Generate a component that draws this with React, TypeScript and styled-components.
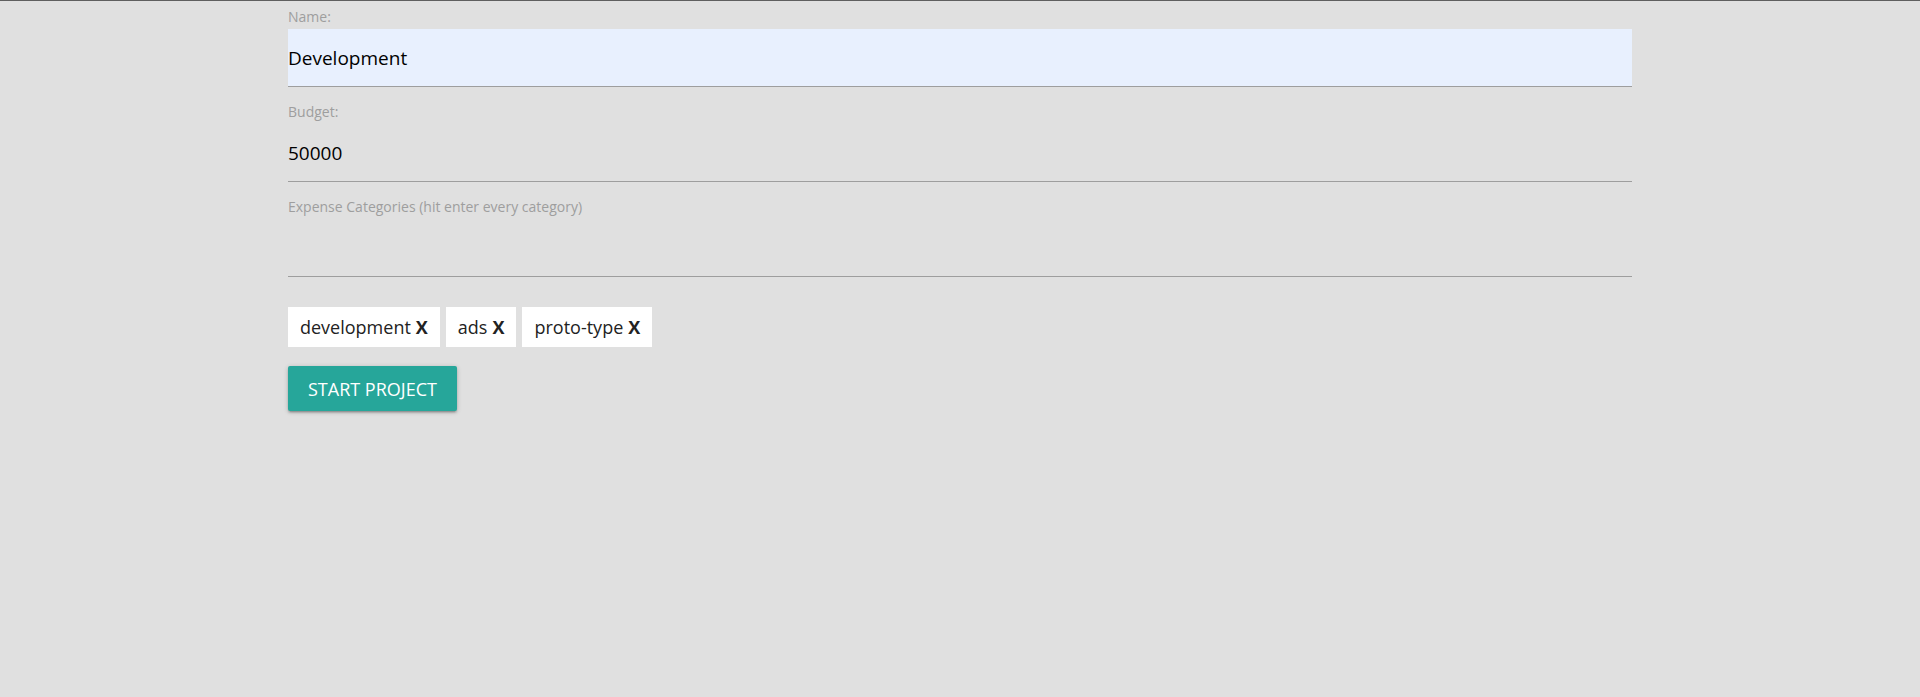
import React from "react";
import styled, { createGlobalStyle } from "styled-components";

const Global = createGlobalStyle`
  html, body { margin: 0; padding: 0; background: #e0e0e0; }
  body { font-family: "Open Sans", "Noto Sans", sans-serif; }
`;

const Page = styled.div`
  min-height: 697px;
  border-top: 1px solid #5f5f5f;
  background: #e0e0e0;
`;

const Container = styled.form`
  width: 70%;
  margin: 0 auto;
  padding-top: 6px;
`;

const Field = styled.div<{ $first?: boolean }>`
  margin-top: ${(p) => (p.$first ? "0" : "15px")};
`;

const Label = styled.label`
  display: block;
  font-size: 14px;
  line-height: 20px;
  color: #9e9e9e;
  margin-bottom: 2px;
`;

const Input = styled.input<{ $filled?: boolean }>`
  display: block;
  box-sizing: border-box;
  width: 100%;
  height: 58px;
  margin: 0;
  padding: 0;
  border: none;
  border-bottom: 1px solid #9e9e9e;
  background: ${(p) => (p.$filled ? "#e8f0fe" : "transparent")};
  font-family: "Open Sans", "Noto Sans", sans-serif;
  font-size: 19px;
  color: #000;
  outline: none;
`;

const Chips = styled.div`
  display: flex;
  gap: 6px;
  margin-top: 30px;
`;

const Chip = styled.div`
  height: 40px;
  display: flex;
  align-items: center;
  padding: 0 12px;
  background: #fff;
  font-size: 18px;
  color: #222;
  gap: 5px;
`;

const Close = styled.span`
  font-weight: 700;
  color: #222;
`;

const Button = styled.button`
  margin-top: 19px;
  height: 45px;
  padding: 0 20px;
  border: none;
  border-radius: 2px;
  background: #26a69a;
  color: #fff;
  font-family: "Open Sans", "Noto Sans", sans-serif;
  font-size: 18px;
  text-transform: uppercase;
  box-shadow: 0 2px 2px 0 rgba(0,0,0,0.14), 0 3px 1px -2px rgba(0,0,0,0.12), 0 1px 5px 0 rgba(0,0,0,0.2);
  cursor: pointer;
`;

const categories = ["development", "ads", "proto-type"];

export default function App() {
  return (
    <Page>
      <Global />
      <Container onSubmit={(e) => e.preventDefault()}>
        <Field $first>
          <Label>Name:</Label>
          <Input $filled defaultValue="Development" />
        </Field>
        <Field>
          <Label>Budget:</Label>
          <Input defaultValue="50000" />
        </Field>
        <Field>
          <Label>Expense Categories (hit enter every category)</Label>
          <Input />
        </Field>
        <Chips>
          {categories.map((c) => (
            <Chip key={c}>
              {c} <Close>X</Close>
            </Chip>
          ))}
        </Chips>
        <Button type="submit">Start Project</Button>
      </Container>
    </Page>
  );
}
